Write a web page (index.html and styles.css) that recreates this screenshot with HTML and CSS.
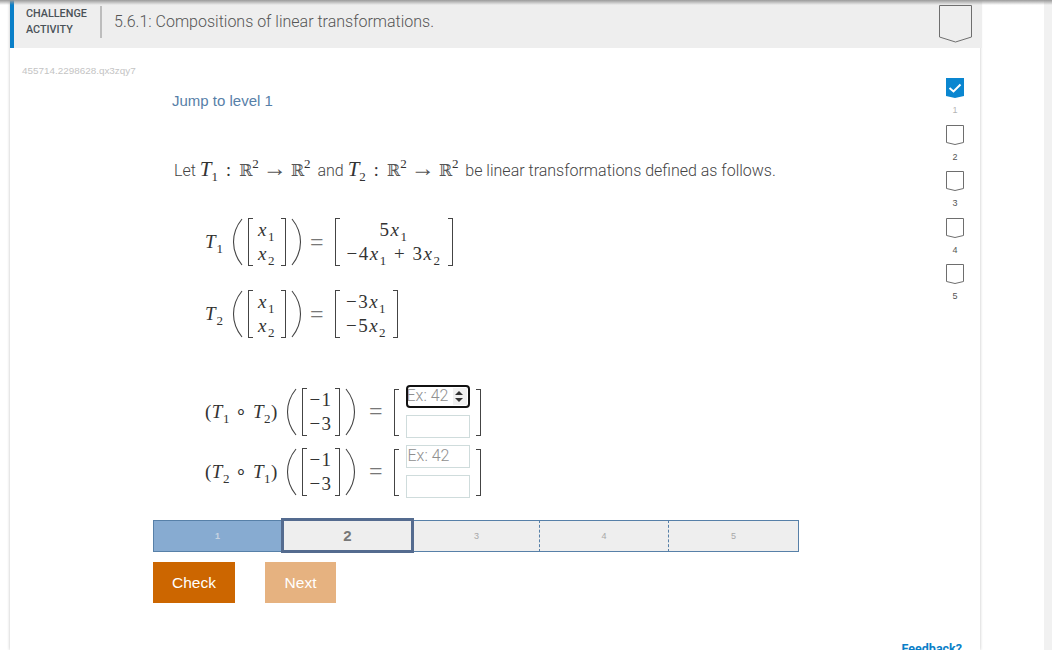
FILE: index.html
```html
<!DOCTYPE html>
<html lang="en">
<head>
  <meta charset="UTF-8">
  <title>5.6.1: Compositions of linear transformations.</title>
  <link rel="stylesheet" href="styles.css">
</head>
<body>
  <div class="top-shade"></div>
  <div class="page">
    <div class="activity">
      <div class="activity__header">
        <div class="activity__label">CHALLENGE<br>ACTIVITY</div>
        <div class="activity__title">5.6.1: Compositions of linear transformations.</div>
        <svg class="activity__badge" viewBox="0 0 33 38"><path d="M0.5 0.5H32.5V32L16.5 37L0.5 32Z" fill="none" stroke="#6e6e6e"/></svg>
      </div>
      <div class="activity__body">
        <div class="activity__main">
          <div class="activity__id">455714.2298628.qx3zqy7</div>
          <div class="jump-link">Jump to level 1</div>
          <p class="intro">Let <span class="math"><i>T</i><sub>1</sub><span class="colon">:</span><span class="reals">ℝ</span><sup>2</sup><span class="arrow">→</span><span class="reals">ℝ</span><sup>2</sup></span> and <span class="math"><i>T</i><sub>2</sub><span class="colon">:</span><span class="reals">ℝ</span><sup>2</sup><span class="arrow">→</span><span class="reals">ℝ</span><sup>2</sup></span> be linear transformations defined as follows.</p>

          <div class="eq eq--first">
            <span class="math eq__name"><i>T</i><sub>1</sub></span>
            <svg class="paren" viewBox="0 0 11 48"><path d="M10 1C3.5 9 1.5 17 1.5 24S3.5 39 10 47"/></svg>
            <div class="matrix matrix--vars"><span><i>x</i><sub>1</sub></span><span><i>x</i><sub>2</sub></span></div>
            <svg class="paren paren--right" viewBox="0 0 11 48"><path d="M10 1C3.5 9 1.5 17 1.5 24S3.5 39 10 47"/></svg>
            <span class="math eq__equals">=</span>
            <div class="matrix matrix--wide"><span>5<i>x</i><sub>1</sub></span><span>−4<i>x</i><sub>1</sub> + 3<i>x</i><sub>2</sub></span></div>
          </div>

          <div class="eq eq--second">
            <span class="math eq__name"><i>T</i><sub>2</sub></span>
            <svg class="paren" viewBox="0 0 11 48"><path d="M10 1C3.5 9 1.5 17 1.5 24S3.5 39 10 47"/></svg>
            <div class="matrix matrix--vars"><span><i>x</i><sub>1</sub></span><span><i>x</i><sub>2</sub></span></div>
            <svg class="paren paren--right" viewBox="0 0 11 48"><path d="M10 1C3.5 9 1.5 17 1.5 24S3.5 39 10 47"/></svg>
            <span class="math eq__equals">=</span>
            <div class="matrix matrix--result"><span>−3<i>x</i><sub>1</sub></span><span>−5<i>x</i><sub>2</sub></span></div>
          </div>

          <div class="answer answer--first">
            <span class="math answer__name">(<i>T</i><sub>1</sub> ∘ <i>T</i><sub>2</sub>)</span>
            <svg class="paren" viewBox="0 0 11 48"><path d="M10 1C3.5 9 1.5 17 1.5 24S3.5 39 10 47"/></svg>
            <div class="matrix matrix--vars"><span>−1</span><span>−3</span></div>
            <svg class="paren paren--right" viewBox="0 0 11 48"><path d="M10 1C3.5 9 1.5 17 1.5 24S3.5 39 10 47"/></svg>
            <span class="math answer__equals">=</span>
            <div class="matrix matrix--inputs">
              <div class="focus-field">
                <input class="field field--focus" type="text" placeholder="Ex: 42">
                <span class="spinner"><i class="spinner__up"></i><i class="spinner__down"></i></span>
              </div>
              <input class="field" type="text">
            </div>
          </div>

          <div class="answer">
            <span class="math answer__name">(<i>T</i><sub>2</sub> ∘ <i>T</i><sub>1</sub>)</span>
            <svg class="paren" viewBox="0 0 11 48"><path d="M10 1C3.5 9 1.5 17 1.5 24S3.5 39 10 47"/></svg>
            <div class="matrix matrix--vars"><span>−1</span><span>−3</span></div>
            <svg class="paren paren--right" viewBox="0 0 11 48"><path d="M10 1C3.5 9 1.5 17 1.5 24S3.5 39 10 47"/></svg>
            <span class="math answer__equals">=</span>
            <div class="matrix matrix--inputs">
              <input class="field" type="text" placeholder="Ex: 42">
              <input class="field" type="text">
            </div>
          </div>

          <div class="levels">
            <div class="level level--done">1</div>
            <div class="level level--current">2</div>
            <div class="level level--three">3</div>
            <div class="level level--four">4</div>
            <div class="level level--five">5</div>
          </div>

          <div class="actions">
            <button class="action action--check">Check</button>
            <button class="action action--next">Next</button>
          </div>
          <div class="feedback">Feedback?</div>
        </div>

        <div class="steps">
          <div class="step step--done">
            <svg viewBox="0 0 18 20"><path d="M0 0H18V18L9 20L0 18Z" fill="#0a86d0"/><path d="M3.5 10L7.5 13.5L14.5 6.5" fill="none" stroke="#fff" stroke-width="2"/></svg>
            <span>1</span>
          </div>
          <div class="step">
            <svg viewBox="0 0 18 20"><path d="M0.5 0.5H17.5V17.5L9 19.5L0.5 17.5Z" fill="none" stroke="#6e6e6e"/></svg>
            <span>2</span>
          </div>
          <div class="step">
            <svg viewBox="0 0 18 20"><path d="M0.5 0.5H17.5V17.5L9 19.5L0.5 17.5Z" fill="none" stroke="#6e6e6e"/></svg>
            <span>3</span>
          </div>
          <div class="step">
            <svg viewBox="0 0 18 20"><path d="M0.5 0.5H17.5V17.5L9 19.5L0.5 17.5Z" fill="none" stroke="#6e6e6e"/></svg>
            <span>4</span>
          </div>
          <div class="step">
            <svg viewBox="0 0 18 20"><path d="M0.5 0.5H17.5V17.5L9 19.5L0.5 17.5Z" fill="none" stroke="#6e6e6e"/></svg>
            <span>5</span>
          </div>
        </div>
      </div>
    </div>
    <div class="side-strip"></div>
  </div>
</body>
</html>
```

FILE: styles.css
```css
html, body {
  margin: 0;
  height: 650px;
  overflow: hidden;
  background: #fff;
}

body {
  font-family: Roboto, "Liberation Sans", sans-serif;
  color: #444;
}

.top-shade {
  position: absolute;
  top: 0;
  left: 0;
  right: 0;
  height: 5px;
  background: linear-gradient(#9a9a9a, rgba(220,220,220,0));
  z-index: 2;
}

.page {
  display: flex;
  justify-content: space-between;
  height: 650px;
}

.side-strip {
  width: 8px;
  background: #f1f1f1;
}

.activity {
  width: 970px;
  height: 650px;
  margin-left: 10px;
  box-shadow: 0 0 3px rgba(0,0,0,.25);
}

/* header */
.activity__header {
  display: flex;
  align-items: center;
  height: 48px;
  box-sizing: border-box;
  padding: 0 10px 4px 12px;
  margin-right: -2px;
  background: #eee;
  border-left: 4px solid #0a7fc8;
}

.activity__label {
  width: 74px;
  height: 32px;
  border-right: 2px solid #bdbdbd;
  font-size: 10.8px;
  font-weight: 500;
  line-height: 16px;
  color: #4a5258;
}

.activity__title {
  flex: 1;
  margin-left: 12px;
  margin-top: -2px;
  font-size: 16px;
  font-weight: 300;
  color: #555;
}

.activity__badge {
  width: 33px;
  height: 38px;
  margin-top: 4px;
}

.activity__body {
  display: flex;
}

.activity__main {
  flex: 1;
}

.activity__id {
  margin: 17px 0 0 12px;
  font-family: "Liberation Sans", sans-serif;
  font-size: 9.9px;
  line-height: 12px;
  color: #c4c4c4;
}

.jump-link {
  margin: 15px 0 0 162px;
  font-family: "Liberation Sans", sans-serif;
  font-size: 15px;
  line-height: 18px;
  color: #5780a8;
}

.intro {
  margin: 48px 0 0 164px;
  height: 22px;
  font-size: 16px;
  font-weight: 300;
  line-height: 22px;
  color: #444;
  white-space: nowrap;
}

/* math */
.math {
  font-family: "Liberation Serif", serif;
  font-size: 19px;
  font-weight: 400;
  letter-spacing: 1px;
  color: #333;
}

.math sub, .matrix sub, .math sup {
  font-size: 13px;
  line-height: 0;
  font-style: normal;
}

.intro .math {
  font-size: 21px;
  letter-spacing: 0;
  margin-right: 3px;
}

.intro .math sub, .intro .math sup {
  font-size: 13px;
}

.colon {
  font-size: 18px;
  margin: 0 8px;
}

.reals {
  font-family: "DejaVu Serif", serif;
  font-size: 16px;
  color: #555;
}

.arrow {
  font-size: 24px;
  line-height: 0;
  margin: 0 4px;
  color: #555;
}

.eq, .answer {
  display: flex;
  align-items: center;
  margin-left: 195px;
}

.eq {
  height: 48px;
}

.eq--first {
  margin-top: 38px;
}

.eq--second {
  margin-top: 24px;
}

.answer {
  height: 53px;
  margin-top: 7px;
}

.answer--first {
  margin-top: 47px;
}

.eq__name {
  width: 27px;
}

.eq__equals, .answer__equals {
  width: 33px;
  padding-left: 13px;
  box-sizing: border-box;
  font-size: 24px;
  letter-spacing: 0;
  color: #777;
}

.eq__equals {
  width: 31px;
  padding-left: 8px;
}

.answer__name {
  width: 81px;
  white-space: nowrap;
  letter-spacing: .5px;
}

.paren {
  width: 11px;
  height: 48px;
  flex: none;
}

.paren path {
  fill: none;
  stroke: #444;
  stroke-width: 1.1;
}

.paren--right {
  transform: scaleX(-1);
}

.matrix {
  position: relative;
  display: flex;
  flex-direction: column;
  align-items: center;
  justify-content: space-between;
  height: 48px;
  box-sizing: border-box;
  padding: 0 8px;
  font-family: "Liberation Serif", serif;
  font-size: 19px;
  letter-spacing: 1.5px;
  line-height: 24px;
  color: #333;
  white-space: nowrap;
}

/* square brackets */
.matrix::before, .matrix::after {
  content: "";
  position: absolute;
  top: 0;
  bottom: 0;
  width: 4px;
  border: solid #444;
  border-width: 1px 0 1px 1.5px;
}

.matrix::before {
  left: 0;
}

.matrix::after {
  right: 0;
  border-width: 1px 1.5px 1px 0;
}

.matrix--vars {
  width: 38px;
  margin: 0 5px;
}

.matrix--wide {
  width: 118px;
  margin-left: 2px;
}

.matrix--result {
  width: 63px;
  margin-left: 2px;
}

.matrix--inputs {
  width: 87px;
  height: 53px;
  padding: 0;
  margin-left: 5px;
}

.matrix--inputs::before, .matrix--inputs::after {
  top: 4px;
  bottom: 2px;
  height: auto;
}

/* inputs */
.field {
  display: block;
  width: 64px;
  height: 23px;
  box-sizing: border-box;
  margin: 0;
  padding: 0 0 2px 1px;
  border: 1px solid #cfdcdc;
  border-radius: 0;
  outline: 0;
  background: #fff;
  font-family: Roboto, sans-serif;
  font-size: 16px;
  font-weight: 300;
}

.field::placeholder {
  color: #8f8f8f;
  opacity: 1;
}

.focus-field {
  position: relative;
  height: 23px;
}

.field--focus {
  border: 2.5px solid #111;
  border-radius: 4px;
  padding-left: 0;
  text-indent: -1px;
}

.spinner {
  position: absolute;
  top: 3px;
  right: 3px;
  width: 14px;
  height: 17px;
  background: #f0f0f0;
}

.spinner i {
  position: absolute;
  left: 2.5px;
  border-left: 4.5px solid transparent;
  border-right: 4.5px solid transparent;
}

.spinner__up {
  top: 3px;
  border-bottom: 4px solid #333;
}

.spinner__down {
  top: 10px;
  border-top: 4px solid #333;
}

/* level bar */
.levels {
  display: flex;
  width: 646px;
  height: 32px;
  margin: 22px 0 0 143px;
  font-family: "Liberation Sans", sans-serif;
  font-size: 9px;
}

.level {
  display: flex;
  align-items: center;
  justify-content: center;
  box-sizing: border-box;
  background: #eee;
  border: solid #5780a8;
  border-width: 1px 0;
  color: #a8a8a8;
}

.level--done {
  width: 128px;
  background: #87abd1;
  border-width: 1px 0 1px 1px;
  color: #c6d3e2;
  font-weight: 700;
}

.level--current {
  width: 133px;
  height: 35px;
  margin-top: -2px;
  border: 3px solid #546b8f;
  font-size: 15px;
  font-weight: 700;
  color: #777;
}

.level--three {
  width: 126px;
  border-right: 1px dashed #5780a8;
}

.level--four {
  width: 129px;
  border-right: 1px dashed #5780a8;
}

.level--five {
  flex: 1;
  border-right-width: 1px;
}

/* buttons */
.actions {
  display: flex;
  gap: 30px;
  margin: 10px 0 0 143px;
}

.action {
  height: 41px;
  padding: 0;
  border: 0;
  border-radius: 0;
  color: #fff;
  font-family: "Liberation Sans", sans-serif;
  font-size: 15.5px;
}

.action--check {
  width: 82px;
  background: #cc6600;
}

.action--next {
  width: 71px;
  background: #e6b280;
}

.feedback {
  margin: 39px -16px 0 0;
  text-align: right;
  font-size: 12.5px;
  font-weight: 700;
  line-height: 14px;
  color: #0a7fc8;
}

/* right hand steps */
.steps {
  width: 18px;
  margin-right: 16px;
  padding-top: 30px;
}

.step {
  display: flex;
  flex-direction: column;
  align-items: center;
  height: 46.5px;
  font-family: "Liberation Sans", sans-serif;
  font-size: 9px;
  line-height: 12px;
  color: #555;
}

.step svg {
  display: block;
  width: 18px;
  height: 20px;
  flex: none;
  margin-bottom: 6px;
}

.step--done span {
  color: #b5b5b5;
}
```
